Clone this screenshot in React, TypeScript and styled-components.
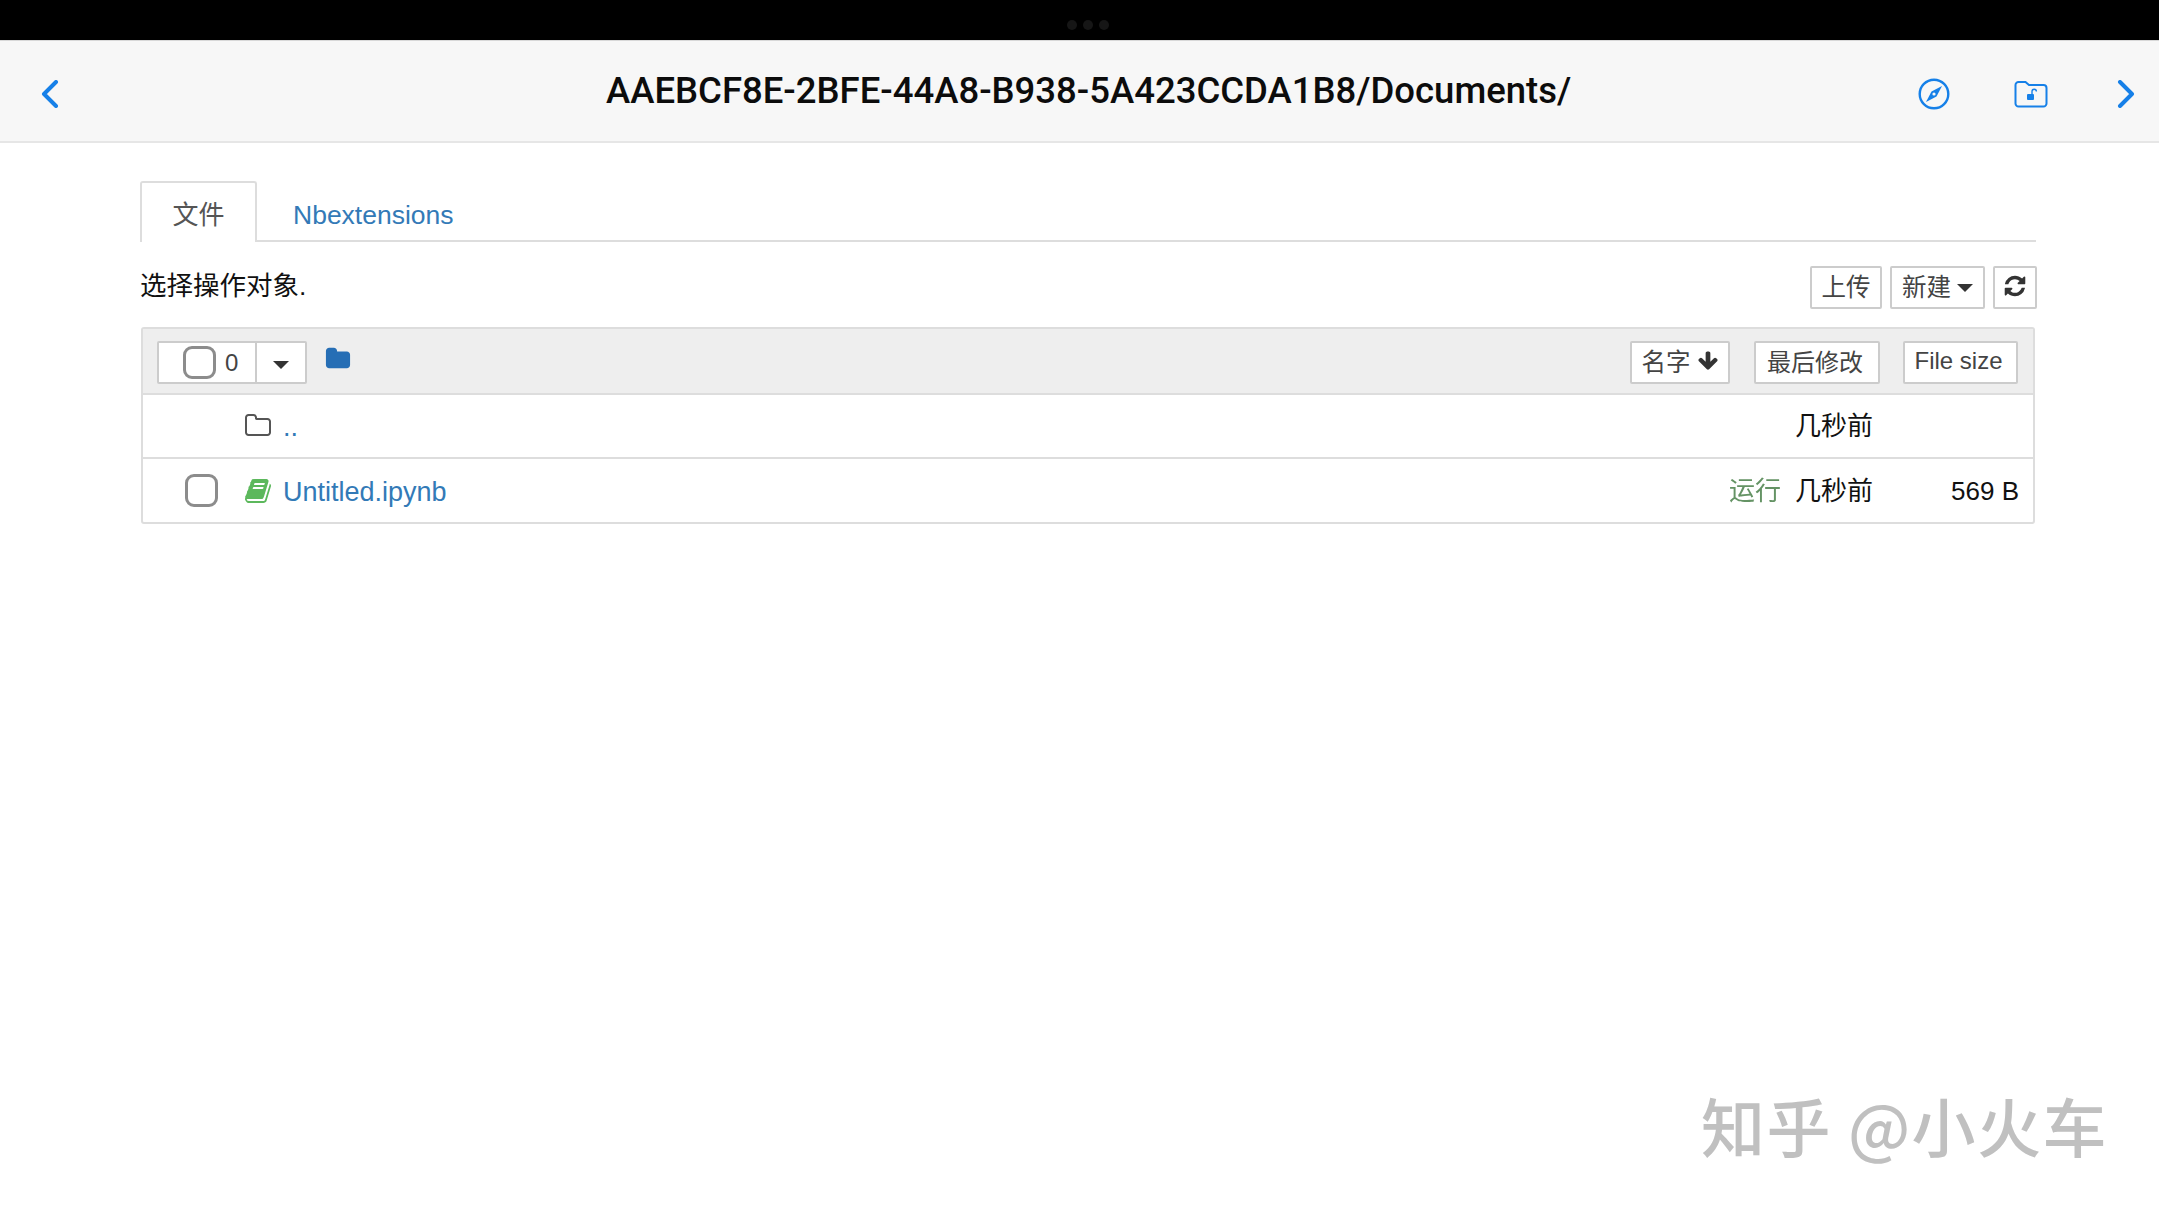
import React from "react";
import styled, { createGlobalStyle } from "styled-components";

const Global = createGlobalStyle`
  html, body { margin: 0; padding: 0; background: #fff; }
  body { font-family: "Liberation Sans", "Noto Sans CJK SC", sans-serif; color: #1c1c1c; }
`;
const Page = styled.div`
  position: relative;
  width: 2159px;
  height: 1212px;
  overflow: hidden;
  background: #fff;
`;
const StatusBar = styled.div`
  height: 40px;
  background: #000;
  display: flex;
  justify-content: center;
  align-items: flex-end;
  gap: 6px;
  padding: 0 0 10px 17px;
  box-sizing: border-box;
`;
const Dot = styled.span`
  width: 10px;
  height: 10px;
  border-radius: 50%;
  background: #161616;
`;
const NavBar = styled.header`
  height: 103px;
  box-sizing: border-box;
  background: #f7f7f7;
  border-top: 1px solid #d8d8d8;
  border-bottom: 2px solid #e6e6e6;
  display: flex;
  align-items: center;
  padding-top: 5px;
`;
const NavLeft = styled.div`
  width: 606px;
  padding-left: 41px;
  box-sizing: border-box;
  display: flex;
`;
const Title = styled.h1`
  margin: 0 0 7px;
  width: 965px;
  text-align: center;
  white-space: nowrap;
  font: 500 36.5px Roboto, "Liberation Sans", sans-serif;
  color: #0c0c0c;
`;
const NavRight = styled.div`
  flex: 1;
  display: flex;
  align-items: center;
  padding-left: 347px;
`;
const CompassSlot = styled.div`
  display: flex;
  margin-right: 64px;
`;
const FolderSlot = styled.div`
  display: flex;
  margin-right: 69px;
`;
const Main = styled.main`
  width: 1897px;
  margin: 38px 0 0 140px;
`;
const Tabs = styled.nav`
  height: 61px;
  box-sizing: border-box;
  width: 1896px;
  border-bottom: 2px solid #ddd;
  display: flex;
`;
const ActiveTab = styled.div`
  width: 117px;
  height: 61px;
  box-sizing: border-box;
  background: #fff;
  border: 2px solid #ddd;
  border-bottom: none;
  border-radius: 3px 3px 0 0;
  display: flex;
  align-items: center;
  justify-content: center;
  font-size: 26px;
  color: #555;
`;
const TabLink = styled.a`
  margin-left: 36px;
  align-self: center;
  padding-top: 9px;
  font-size: 26.5px;
  color: #337ab7;
`;
const ActionRow = styled.div`
  height: 85px;
  box-sizing: border-box;
  display: flex;
  justify-content: space-between;
  padding-top: 24px;
`;
const Hint = styled.div`
  font-size: 26.5px;
  line-height: 38px;
  padding-top: 1px;
  color: #111;
`;
const Actions = styled.div`
  display: flex;
  gap: 8px;
  height: 43px;
`;
const Button = styled.div<{ $w: number }>`
  width: ${(p) => p.$w}px;
  height: 43px;
  box-sizing: border-box;
  background: #fff;
  border: 2px solid #ccc;
  border-radius: 2px;
  display: flex;
  align-items: center;
  justify-content: center;
  gap: 6px;
  padding-bottom: 4px;
  font-size: 24.5px;
  color: #444;
  white-space: nowrap;
`;
const SortButton = styled(Button)`
  font-size: 24px;
  padding-right: 4px;
`;
const Caret = styled.span`
  width: 0;
  height: 0;
  border-left: 8px solid transparent;
  border-right: 8px solid transparent;
  border-top: 8px solid #333;
  margin-top: 5px;
`;
const Table = styled.section`
  width: 1894px;
  margin-left: 1px;
  box-sizing: border-box;
  border: 2px solid #ddd;
  border-radius: 3px;
  height: 197px;
`;
const Toolbar = styled.div`
  height: 66px;
  box-sizing: border-box;
  background: #eee;
  border-bottom: 2px solid #ddd;
  padding: 12px 15px 0 14px;
  display: flex;
`;
const SelectGroup = styled.div`
  width: 150px;
  height: 43px;
  box-sizing: border-box;
  display: flex;
  background: #fff;
  border: 2px solid #ccc;
  border-radius: 2px;
`;
const SelectLeft = styled.div`
  width: 98px;
  border-right: 2px solid #ccc;
  display: flex;
  align-items: center;
  padding-left: 24px;
  box-sizing: border-box;
  gap: 9px;
  font-size: 24px;
  color: #444;
`;
const SelectRight = styled.div`
  flex: 1;
  display: flex;
  align-items: center;
  justify-content: center;
`;
const Checkbox = styled.span`
  flex: none;
  display: block;
  width: 33px;
  height: 33px;
  box-sizing: border-box;
  border: 3px solid #8c8c8c;
  border-radius: 9px;
  background: #fff;
`;
const FolderBtn = styled.div`
  margin: 5px 0 0 18px;
  display: flex;
`;
const Spacer = styled.div`
  flex: 1;
`;
const SortGroup = styled.div`
  display: flex;
`;
const SortSlot = styled.div<{ $gap: number }>`
  margin-left: ${(p) => p.$gap}px;
`;
const Row = styled.div<{ $last?: boolean }>`
  height: 64px;
  box-sizing: border-box;
  border-bottom: ${(p) => (p.$last ? "none" : "2px solid #ddd")};
  display: flex;
  align-items: center;
`;
const CheckCell = styled.div`
  width: 101px;
  flex: none;
  padding-left: 42px;
  box-sizing: border-box;
  margin-bottom: 2px;
`;
const IconCell = styled.div`
  width: 39px;
  flex: none;
  display: flex;
`;
const ItemLink = styled.a`
  font-size: 27px;
  color: #337ab7;
  padding-top: 3px;
`;
const Running = styled.span`
  margin-left: auto;
  font-size: 26px;
  color: #5cb85c;
  margin-right: 14px;
  padding-bottom: 6px;
  filter: saturate(0.6) brightness(0.85);
`;
const Time = styled.span<{ $alone?: boolean }>`
  width: 79px;
  padding-bottom: 5px;
  font-size: 26px;
  color: #111;
  white-space: nowrap;
  margin-left: ${(p) => (p.$alone ? "auto" : "0")};
`;
const Size = styled.span`
  width: 159px;
  padding-right: 14px;
  box-sizing: border-box;
  text-align: right;
  font-size: 26px;
  color: #111;
`;
const Watermark = styled.div`
  position: absolute;
  left: 1701px;
  top: 1084px;
  white-space: nowrap;
  font: 500 64px "Noto Sans CJK SC", sans-serif;
  letter-spacing: 1.5px;
  line-height: 80px;
  color: #c0c0c0;
`;

const Chevron = ({ right }: { right?: boolean }) => (
  <svg width="18" height="28" viewBox="0 0 18 28" fill="none" stroke="#1680e8" strokeWidth="4" strokeLinecap="round" strokeLinejoin="round">
    <path d={right ? "M3 2l12 12L3 26" : "M15 2L3 14l12 12"} />
  </svg>
);
const Compass = () => (
  <svg width="32" height="32" viewBox="0 0 32 32">
    <circle cx="16" cy="16" r="14.3" fill="none" stroke="#1680e8" strokeWidth="2.4" />
    <path d="M24 8l-10.5 5.5L8 24l10.5-5.5z" fill="#1680e8" />
    <circle cx="16" cy="16" r="1.6" fill="#f7f7f7" />
  </svg>
);
const LockFolder = () => (
  <svg width="34" height="28" viewBox="0 0 34 28">
    <path d="M1.5 5a3 3 0 0 1 3-3h7l3.5 3h14.5a3 3 0 0 1 3 3v15.5a3 3 0 0 1-3 3h-25a3 3 0 0 1-3-3z" fill="none" stroke="#1680e8" strokeWidth="2" />
    <rect x="13" y="14" width="7" height="6" rx="1" fill="#1680e8" />
    <path d="M18 14v-2.5a2.2 2.2 0 0 1 4.4 0" fill="none" stroke="#1680e8" strokeWidth="1.4" />
  </svg>
);
const Fa = ({ d, size, color, w = 1792 }: { d: string; size: number; color: string; w?: number }) => (
  <svg width={size} height={size} viewBox={`0 0 ${w} 1792`} fill={color}>
    <path d={d} />
  </svg>
);
const refreshD = "M1639 1056q0 5-1 7-64 268-268 434.5t-478 166.5q-146 0-282.5-55t-243.5-157l-129 129q-19 19-45 19t-45-19-19-45v-448q0-26 19-45t45-19h448q26 0 45 19t19 45-19 45l-137 137q71 66 161 102t187 36q134 0 250-65t186-179q11-17 53-117 8-23 30-23h192q13 0 22.5 9.5t9.5 22.5zm25-800v448q0 26-19 45t-45 19h-448q-26 0-45-19t-19-45 19-45l138-138q-148-137-349-137-134 0-250 65t-186 179q-11 17-53 117-8 23-30 23h-199q-13 0-22.5-9.5t-9.5-22.5v-7q65-268 270-434.5t480-166.5q146 0 284 55.5t245 156.5l130-129q19-19 45-19t45 19 19 45z";
const arrowD = "M1675 832q0 53-37 90l-651 652q-39 37-91 37-53 0-90-37l-651-652q-38-36-38-90 0-53 38-91l74-75q39-37 91-37 53 0 90 37l294 294v-704q0-52 38-90t90-38h128q52 0 90 38t38 90v704l294-294q37-37 90-37 52 0 91 37l75 75q37 39 37 91z";
const folderD = "M1728 608v704q0 92-66 158t-158 66h-1216q-92 0-158-66t-66-158v-960q0-92 66-158t158-66h320q92 0 158 66t66 158v32h672q92 0 158 66t66 158z";
const folderOD = "M1600 1312v-704q0-40-28-68t-68-28h-704q-40 0-68-28t-28-68v-64q0-40-28-68t-68-28h-320q-40 0-68 28t-28 68v960q0 40 28 68t68 28h1216q40 0 68-28t28-68zm128-704v704q0 92-66 158t-158 66h-1216q-92 0-158-66t-66-158v-960q0-92 66-158t158-66h320q92 0 158 66t66 158v32h672q92 0 158 66t66 158z";
const bookD = "M1703 478q40 57 18 129l-275 906q-19 64-76.5 107.5t-122.5 43.5h-923q-77 0-148.5-53.5t-99.5-131.5q-24-67-2-127 0-4 3-27t4-37q1-8-3-21.5t-3-19.5q2-11 8-21t16.5-23.5 16.5-23.5q23-38 45-91.5t30-91.5q3-10 .5-30t-.5-28q3-11 17-28t17-23q21-36 42-92t25-90q1-9-2.5-32t.5-28q4-13 22-30.5t22-22.5q19-26 42.5-84.5t27.5-96.5q1-8-3-25.5t-2-26.5q2-8 9-18t18-23 17-21q8-12 16.5-30.5t15-35 16-36 19.5-32 26.5-23.5 36-11.5 47.5 5.5l-1 3q38-9 51-9h761q74 0 114 56t18 130l-274 906q-36 119-71.5 153.5t-128.5 34.5h-869q-27 0-38 15-11 16-1 43 24 70 144 70h923q29 0 56-15.5t35-41.5l300-987q7-22 5-57 38 15 59 43zm-1064 2q-4 13 2 22.5t20 9.5h608q13 0 25.5-9.5t16.5-22.5l21-64q4-13-2-22.5t-20-9.5h-608q-13 0-25.5 9.5t-16.5 22.5zm-83 256q-4 13 2 22.5t20 9.5h608q13 0 25.5-9.5t16.5-22.5l21-64q4-13-2-22.5t-20-9.5h-608q-13 0-25.5 9.5t-16.5 22.5z";

export default function App() {
  return (
    <Page>
      <Global />
      <StatusBar>
        <Dot />
        <Dot />
        <Dot />
      </StatusBar>
      <NavBar>
        <NavLeft>
          <Chevron />
        </NavLeft>
        <Title>AAEBCF8E-2BFE-44A8-B938-5A423CCDA1B8/Documents/</Title>
        <NavRight>
          <CompassSlot>
            <Compass />
          </CompassSlot>
          <FolderSlot>
            <LockFolder />
          </FolderSlot>
          <Chevron right />
        </NavRight>
      </NavBar>
      <Main>
        <Tabs>
          <ActiveTab>文件</ActiveTab>
          <TabLink>Nbextensions</TabLink>
        </Tabs>
        <ActionRow>
          <Hint>选择操作对象.</Hint>
          <Actions>
            <Button $w={72}>上传</Button>
            <Button $w={95}>
              新建
              <Caret />
            </Button>
            <Button $w={44}>
              <Fa d={refreshD} size={24} color="#333" />
            </Button>
          </Actions>
        </ActionRow>
        <Table>
          <Toolbar>
            <SelectGroup>
              <SelectLeft>
                <Checkbox />0
              </SelectLeft>
              <SelectRight>
                <Caret />
              </SelectRight>
            </SelectGroup>
            <FolderBtn>
              <Fa d={folderD} size={26} color="#266eb5" />
            </FolderBtn>
            <Spacer />
            <SortGroup>
              <SortSlot $gap={0}>
                <Button $w={100}>
                  名字
                  <Fa d={arrowD} size={22} color="#333" />
                </Button>
              </SortSlot>
              <SortSlot $gap={24}>
                <SortButton $w={126}>最后修改</SortButton>
              </SortSlot>
              <SortSlot $gap={23}>
                <SortButton $w={115}>File size</SortButton>
              </SortSlot>
            </SortGroup>
          </Toolbar>
          <Row>
            <CheckCell />
            <IconCell>
              <Fa d={folderOD} size={28} color="#555" />
            </IconCell>
            <ItemLink>..</ItemLink>
            <Time $alone>几秒前</Time>
            <Size />
          </Row>
          <Row $last>
            <CheckCell>
              <Checkbox />
            </CheckCell>
            <IconCell>
              <Fa d={bookD} size={28} color="#5cb85c" />
            </IconCell>
            <ItemLink>Untitled.ipynb</ItemLink>
            <Running>运行</Running>
            <Time>几秒前</Time>
            <Size>569 B</Size>
          </Row>
        </Table>
      </Main>
      <Watermark>知乎 @小火车</Watermark>
    </Page>
  );
}
